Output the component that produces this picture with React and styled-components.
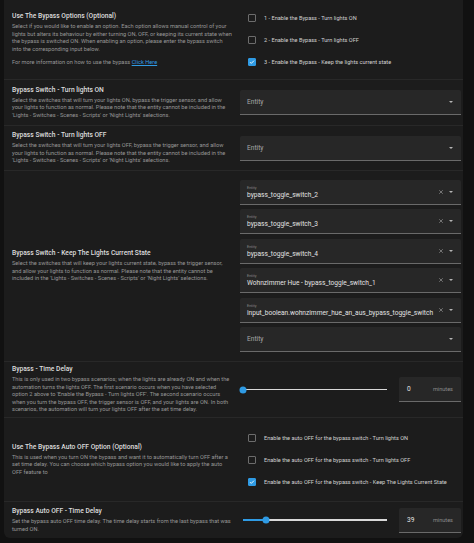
import React from 'react';
import styled, { createGlobalStyle } from 'styled-components';

const GlobalStyle = createGlobalStyle`
  html, body {
    margin: 0;
    padding: 0;
    background: #111111;
    font-family: Roboto, "Liberation Sans", sans-serif;
    -webkit-font-smoothing: antialiased;
  }
`;

const Card = styled.div`
  width: 459px;
  margin-left: 4px;
  background: #1c1c1c;
  border-radius: 0 0 6px 6px;
  overflow: hidden;
`;

const Row = styled.div`
  box-sizing: border-box;
  display: grid;
  grid-template-columns: 223px 221px;
  column-gap: 5px;
  align-items: center;
  height: ${(p) => p.$h}px;
  padding: 0 2px 0 8px;
  border-bottom: ${(p) => (p.$last ? 'none' : '1px solid #282828')};
`;

const Info = styled.div`
  display: flex;
  flex-direction: column;
  padding-right: 3px;
`;

const Title = styled.div`
  font-size: 6.7px;
  line-height: 8px;
  font-weight: 500;
  color: #dcdcdc;
  margin-bottom: 3px;
`;

const Desc = styled.div`
  font-size: 5.65px;
  line-height: 7.5px;
  color: #979797;
  & + & {
    margin-top: 6px;
  }
`;

const Link = styled.a`
  color: #2f9be4;
  text-decoration: underline;
`;

const CheckList = styled.div`
  display: flex;
  flex-direction: column;
  gap: 12px;
  padding-left: 8px;
`;

const CheckRow = styled.label`
  display: flex;
  align-items: center;
  gap: 8px;
  font-size: 5.6px;
  line-height: 10px;
  color: #d2d2d2;
`;

const Box = styled.span`
  box-sizing: border-box;
  width: 8px;
  height: 8px;
  border-radius: 1px;
  border: 1.2px solid ${(p) => (p.$on ? '#2f9be4' : '#6c6c6c')};
  background: ${(p) => (p.$on ? '#2f9be4' : 'transparent')};
  display: flex;
  align-items: center;
  justify-content: center;
`;

const SelectStack = styled.div`
  display: flex;
  flex-direction: column;
  gap: 4.5px;
`;

const Field = styled.div`
  box-sizing: border-box;
  height: 25px;
  background: #272727;
  border-bottom: 1px solid #6a6a6a;
  border-radius: 2px 2px 0 0;
  display: flex;
  align-items: center;
  padding: 0 8px 0 7px;
  gap: 6px;
`;

const FieldText = styled.div`
  flex: 1;
  min-width: 0;
  display: flex;
  flex-direction: column;
  white-space: nowrap;
`;

const SmallLabel = styled.span`
  font-size: 3.8px;
  line-height: 5px;
  color: #8a8a8a;
  margin-bottom: 1px;
`;

const Value = styled.span`
  font-size: 6.6px;
  line-height: 8px;
  color: ${(p) => (p.$placeholder ? '#a8a8a8' : '#e3e3e3')};
`;

const Icons = styled.div`
  display: flex;
  align-items: center;
  gap: 5px;
`;

const Caret = styled.span`
  width: 0;
  height: 0;
  border-left: 2.2px solid transparent;
  border-right: 2.2px solid transparent;
  border-top: 2.2px solid #b5b5b5;
`;

const SliderLine = styled.div`
  display: flex;
  align-items: center;
  gap: 12px;
`;

const Track = styled.div`
  position: relative;
  margin-left: 3px;
  width: 144px;
  height: 1.6px;
  background: #d9d9d9;
`;

const TrackFill = styled.div`
  position: absolute;
  left: 0;
  top: 0;
  height: 100%;
  background: #2f9be4;
`;

const Thumb = styled.div`
  position: absolute;
  top: 50%;
  width: 7px;
  height: 7px;
  border-radius: 50%;
  background: #2f9be4;
  transform: translate(-50%, -50%);
`;

const NumberBox = styled(Field)`
  width: 62px;
  padding: 0 8px;
  justify-content: space-between;
`;

const Unit = styled.span`
  font-size: 5.6px;
  color: #8a8a8a;
`;

function Check({ on, children }) {
  return (
    <CheckRow>
      <Box $on={on}>
        {on && (
          <svg width="6" height="6" viewBox="0 0 24 24">
            <path d="M4 12.5l5 5L20 6.5" fill="none" stroke="#fff" strokeWidth="3.5" />
          </svg>
        )}
      </Box>
      {children}
    </CheckRow>
  );
}

function EntitySelect({ value }) {
  return (
    <Field>
      <FieldText>
        {value ? (
          <>
            <SmallLabel>Entity</SmallLabel>
            <Value>{value}</Value>
          </>
        ) : (
          <Value $placeholder>Entity</Value>
        )}
      </FieldText>
      <Icons>
        {value && (
          <svg width="6" height="6" viewBox="0 0 24 24">
            <path d="M5 5l14 14M19 5L5 19" stroke="#a8a8a8" strokeWidth="2.4" />
          </svg>
        )}
        <Caret />
      </Icons>
    </Field>
  );
}

function Slider({ value, max }) {
  const pct = (value / max) * 100;
  return (
    <SliderLine>
      <Track>
        <TrackFill style={{ width: `${pct}%` }} />
        <Thumb style={{ left: `${pct}%` }} />
      </Track>
      <NumberBox>
        <Value>{value}</Value>
        <Unit>minutes</Unit>
      </NumberBox>
    </SliderLine>
  );
}

const bypassSwitches = [
  'bypass_toggle_switch_2',
  'bypass_toggle_switch_3',
  'bypass_toggle_switch_4',
  'Wohnzimmer Hue - bypass_toggle_switch_1',
  'input_boolean.wohnzimmer_hue_an_aus_bypass_toggle_switch',
  '',
];

export default function App() {
  return (
    <>
      <GlobalStyle />
      <Card>
        <Row $h={80}>
          <Info>
            <Title>Use The Bypass Options (Optional)</Title>
            <Desc>
              Select if you would like to enable an option. Each option allows manual control of your
              lights but alters its behaviour by either turning ON, OFF, or keeping its current state when
              the bypass is switched ON. When enabling an option, please enter the bypass switch into the
              corresponding input below.
            </Desc>
            <Desc>
              For more information on how to use the bypass <Link>Click Here</Link>
            </Desc>
          </Info>
          <CheckList>
            <Check>1 - Enable the Bypass - Turn lights ON</Check>
            <Check>2 - Enable the Bypass - Turn lights OFF</Check>
            <Check on>3 - Enable the Bypass - Keep the lights current state</Check>
          </CheckList>
        </Row>

        <Row $h={46}>
          <Info>
            <Title>Bypass Switch - Turn lights ON</Title>
            <Desc>
              Select the switches that will turn your lights ON, bypass the trigger sensor, and allow
              your lights to function as normal. Please note that the entity cannot be included in the
              'Lights - Switches - Scenes - Scripts' or 'Night Lights' selections.
            </Desc>
          </Info>
          <EntitySelect />
        </Row>

        <Row $h={45}>
          <Info>
            <Title>Bypass Switch - Turn lights OFF</Title>
            <Desc>
              Select the switches that will turn your lights OFF, bypass the trigger sensor, and allow
              your lights to function as normal. Please note that the entity cannot be included in the
              'Lights - Switches - Scenes - Scripts' or 'Night Lights' selections.
            </Desc>
          </Info>
          <EntitySelect />
        </Row>

        <Row $h={191}>
          <Info>
            <Title>Bypass Switch - Keep The Lights Current State</Title>
            <Desc>
              Select the switches that will keep your lights current state, bypass the trigger sensor,
              and allow your lights to function as normal. Please note that the entity cannot be
              included in the 'Lights - Switches - Scenes - Scripts' or 'Night Lights' selections.
            </Desc>
          </Info>
          <SelectStack>
            {bypassSwitches.map((s, i) => (
              <EntitySelect key={i} value={s} />
            ))}
          </SelectStack>
        </Row>

        <Row $h={56}>
          <Info>
            <Title>Bypass - Time Delay</Title>
            <Desc>
              This is only used in two bypass scenarios; when the lights are already ON and when the
              automation turns the lights OFF. The first scenario occurs when you have selected option 2
              above to 'Enable the Bypass - Turn lights OFF'. The second scenario occurs when you turn
              the bypass OFF, the trigger sensor is OFF, and your lights are ON. In both scenarios, the
              automation will turn your lights OFF after the set time delay.
            </Desc>
          </Info>
          <Slider value={0} max={60} />
        </Row>

        <Row $h={84}>
          <Info>
            <Title>Use The Bypass Auto OFF Option (Optional)</Title>
            <Desc>
              This is used when you turn ON the bypass and want it to automatically turn OFF after a set
              time delay. You can choose which bypass option you would like to apply the auto OFF feature
              to
            </Desc>
          </Info>
          <CheckList>
            <Check>Enable the auto OFF for the bypass switch - Turn lights ON</Check>
            <Check>Enable the auto OFF for the bypass switch - Turn lights OFF</Check>
            <Check on>Enable the auto OFF for the bypass switch - Keep The Lights Current State</Check>
          </CheckList>
        </Row>

        <Row $h={36} $last>
          <Info>
            <Title>Bypass Auto OFF - Time Delay</Title>
            <Desc>
              Set the bypass auto OFF time delay. The time delay starts from the last bypass that was
              turned ON.
            </Desc>
          </Info>
          <Slider value={39} max={240} />
        </Row>
      </Card>
    </>
  );
}
